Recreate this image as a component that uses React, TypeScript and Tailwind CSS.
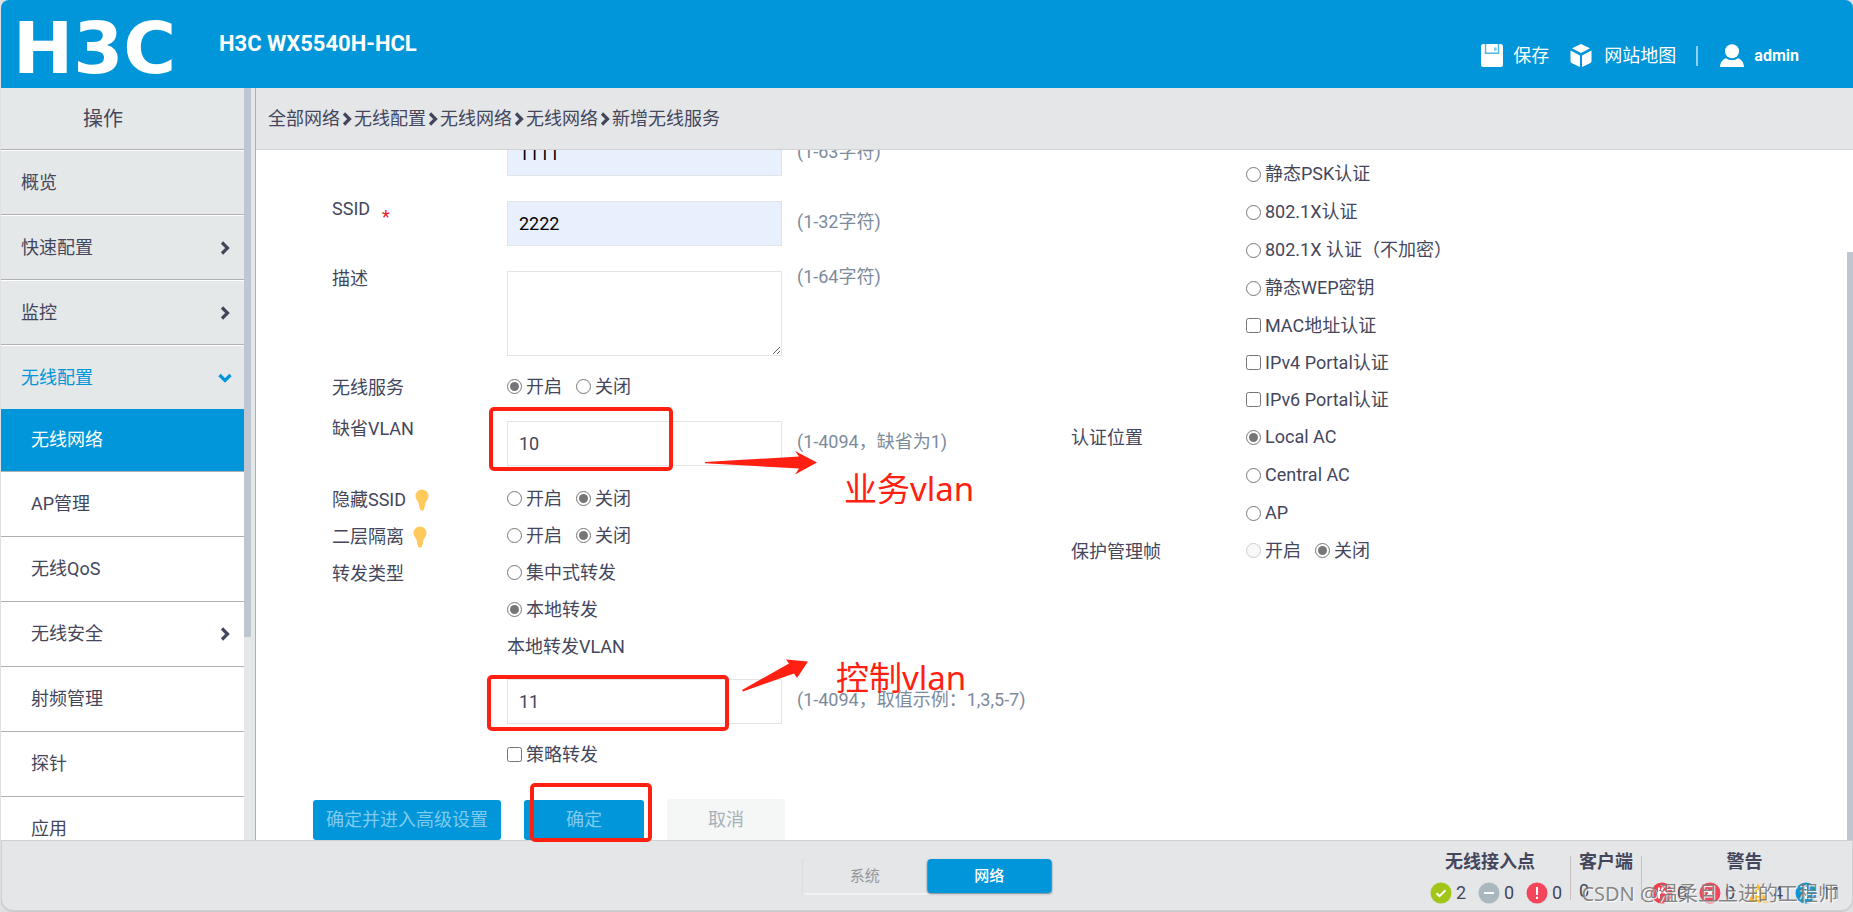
// 无线服务新增页
// 顶栏 / 左侧菜单 / 面包屑 / 表单 / 底部状态栏，最上层为操作标注
import { useId, type ReactNode } from 'react'

type MenuItem = { label: string; arrow?: boolean; open?: boolean; active?: boolean }

const TOP_MENU: MenuItem[] = [
  { label: '概览' },
  { label: '快速配置', arrow: true },
  { label: '监控', arrow: true },
  { label: '无线配置', arrow: true, open: true },
]

const SUB_MENU: MenuItem[] = [
  { label: '无线网络', active: true },
  { label: 'AP管理' },
  { label: '无线QoS' },
  { label: '无线安全', arrow: true },
  { label: '射频管理' },
  { label: '探针' },
  { label: '应用' },
]

const CRUMBS = ['全部网络', '无线配置', '无线网络', '无线网络', '新增无线服务']

const AUTH_RADIOS = ['静态PSK认证', '802.1X认证', '802.1X 认证（不加密）', '静态WEP密钥']
const AUTH_CHECKS = ['MAC地址认证', 'IPv4 Portal认证', 'IPv6 Portal认证']
const AUTH_PLACES = ['Local AC', 'Central AC', 'AP']

function Chevron({ className = '' }: { className?: string }) {
  return (
    <svg viewBox="0 0 10 14" className={`h-[14px] w-[10px] ${className}`} fill="none" stroke="currentColor" strokeWidth="3.2">
      <path d="M2 1.5 7.5 7 2 12.5" />
    </svg>
  )
}

function Bulb() {
  return (
    <svg viewBox="0 0 14 22" className="h-[22px] w-[14px]" fill="#ffc95c">
      <path d="M7 .5A6.500 6.500 0 0 0 .5 7.100c0 2.700 1.500 4 2.500 5.700.7 1.200.8 2.100.9 3.200h6.200c.1-1.100.2-2 .9-3.200 1-1.700 2.500-3 2.500-5.700A6.500 6.500 0 0 0 7 .5z" />
      <path d="M4.200 15.500h5.600v3.300H4.200zM5 18.500h4v1.900c0 .7-.8 1.200-2 1.200s-2-.5-2-1.200z" />
    </svg>
  )
}

function SaveIcon() {
  return (
    <svg viewBox="0 0 22 23" className="h-[23px] w-[22px]">
      <path d="M2.500 0h17A2.500 2.500 0 0 1 22 2.500v18a2.500 2.500 0 0 1-2.500 2.500h-17A2.500 2.500 0 0 1 0 20.500v-18A2.500 2.500 0 0 1 2.500 0z" fill="#fff" />
      <path d="M4.500 0v9.300h13V0" fill="none" stroke="#4db5e3" strokeWidth="1.400" />
      <rect x="13" y="3.500" width="2.600" height="3.200" fill="#7ccbec" />
    </svg>
  )
}

function CubeIcon() {
  return (
    <svg viewBox="0 0 22 23" className="h-[23px] w-[22px]" fill="#fff">
      <path d="M11 0 20 4.200 11 9 2 4.200z" />
      <path d="M.5 6.500 10 11.500V23l-8-3.700a2.200 2.200 0 0 1-1.500-2z" />
      <path d="M21.500 6.500 12 11.500V23l8-3.700a2.200 2.200 0 0 0 1.500-2z" />
    </svg>
  )
}

function UserIcon() {
  return (
    <svg viewBox="0 0 24 23" className="h-[23px] w-6" fill="#fff">
      <circle cx="12" cy="7.200" r="7" />
      <path d="M0 23c.2-5 2.800-7.800 6-8.800 1.700 1.200 3.700 1.900 6 1.900s4.300-.7 6-1.900c3.200 1 5.800 3.800 6 8.800z" />
    </svg>
  )
}

type StatusKind = 'ok' | 'off' | 'alert' | 'wave' | 'flag' | 'warn' | 'info'

const STATUS_FILL: Record<StatusKind, string> = {
  ok: '#a2c617',
  off: '#a9b7bf',
  alert: '#f4465a',
  wave: '#ee3f4d',
  flag: '#f4465a',
  warn: '#fcb92c',
  info: '#0f95d6',
}

function StatusIcon({ kind }: { kind: StatusKind }) {
  return (
    <svg viewBox="0 0 22 22" className="size-[22px]" fill="none" stroke="#fff" strokeWidth="2">
      {kind === 'warn' ? (
        <path d="M11 1.500 21.500 20.500H.5z" fill={STATUS_FILL.warn} stroke="none" />
      ) : (
        <circle cx="11" cy="11" r="10.500" fill={STATUS_FILL[kind]} stroke="none" />
      )}
      {kind === 'ok' && <path d="m6.500 11.200 3 3 6-6" />}
      {kind === 'off' && <path d="M6 11h10" />}
      {kind === 'alert' && <path d="M11 5v8M11 14.800v2.200" />}
      {kind === 'wave' && <path d="M8 5.500v11M12 5.500l-3 6M13 9l3 4" />}
      {kind === 'flag' && <path d="m7.500 7.500 7 7M14.500 7.500l-7 7" />}
      {kind === 'warn' && <path d="M11 8v6M11 15.500v2" />}
      {kind === 'info' && <path d="M11 5v2.200M11 9v8" />}
    </svg>
  )
}

function Stat({ kind, value }: { kind: StatusKind; value: number }) {
  return (
    <span className="flex w-12 shrink-0 items-center gap-1">
      <StatusIcon kind={kind} />
      {value}
    </span>
  )
}

type ChoiceProps = { label: string; name?: string; type?: 'radio' | 'checkbox'; checked?: boolean; disabled?: boolean }

function Choice({ label, name, type = 'radio', checked, disabled }: ChoiceProps) {
  return (
    <label className="flex items-center gap-1 whitespace-nowrap">
      <input type={type} name={name} defaultChecked={checked} disabled={disabled} className="size-[15px] accent-[#767676]" />
      {label}
    </label>
  )
}

function OnOff({ name, on, lockOn }: { name: string; on?: boolean; lockOn?: boolean }) {
  return (
    <div className="flex h-[37px] items-center gap-[14px]">
      <Choice name={name} label="开启" checked={on} disabled={lockOn} />
      <Choice name={name} label="关闭" checked={!on} />
    </div>
  )
}

function OptionRow({ label, bulb, children }: { label?: string; bulb?: boolean; children: ReactNode }) {
  return (
    <div className="flex items-start">
      <div className="-mb-1 flex h-10 w-[175px] shrink-0 items-center gap-[9px]">
        {label}
        {bulb && <Bulb />}
      </div>
      <div>{children}</div>
    </div>
  )
}

type FieldProps = { label?: string; hint: string; value?: string; required?: boolean; filled?: boolean; area?: boolean }

function Field({ label, hint, value, required, filled, area }: FieldProps) {
  const id = useId()
  return (
    <div className="flex items-start">
      <label htmlFor={id} className="flex h-4 w-[175px] shrink-0 items-start gap-3 leading-4">
        {label}
        {required && <span className="pt-2 text-[#e8202e]">*</span>}
      </label>
      {area ? (
        <textarea id={id} className="block h-[85px] w-[275px] border border-[#e3e4e6] px-[11px]" />
      ) : (
        <input
          id={id}
          aria-label={label ?? hint}
          defaultValue={value}
          className={`h-[45px] w-[275px] border border-[#e3e4e6] px-[11px] ${filled ? 'bg-[#e8effd] text-black' : 'bg-white'}`}
        />
      )}
      <span className={`ml-[15px] whitespace-nowrap text-[#7c8b9c] ${area ? 'leading-3' : 'leading-[42px]'}`}>{hint}</span>
    </div>
  )
}

function Sidebar() {
  return (
    <aside className="flex w-[255px] shrink-0 border-r border-[#b0b0b2] bg-[#e4e8e8]">
      <nav className="flex-1 overflow-hidden">
        <div className="flex h-[62px] items-center border-b border-[#b0b0b2] pl-[82px] text-xl">操作</div>
        <ul>
          {TOP_MENU.map((m) => (
            <li key={m.label}>
              <a
                href="#"
                className={`flex items-center justify-between border-t border-white pl-5 pr-[14px] ${
                  m.open ? 'h-16 text-[#0096d9]' : 'h-[65px] border-b border-b-[#b0b0b2]'
                }`}
              >
                {m.label}
                {m.arrow && <Chevron className={m.open ? 'rotate-90' : ''} />}
              </a>
            </li>
          ))}
        </ul>
        <ul className="bg-white">
          {SUB_MENU.map((m) => (
            <li key={m.label}>
              <a
                href="#"
                className={`flex items-center justify-between border-b border-[#b0b0b2] pl-[30px] pr-[14px] ${
                  m.active ? 'h-[63px] bg-[#0096d9] text-white' : 'h-[65px]'
                }`}
              >
                {m.label}
                {m.arrow && <Chevron />}
              </a>
            </li>
          ))}
        </ul>
      </nav>
      <div className="w-[11px]">
        <div className="h-[549px] w-[7px] bg-[#bdc6d1]" />
      </div>
    </aside>
  )
}

function ServiceForm() {
  return (
    <form className="-mt-[19px]">
      <div className="grid grid-cols-2 pl-[76px] pr-[37px]">
        <div>
          <div className="flex flex-col gap-[25px]">
            <Field hint="(1-63字符)" value="1111" filled />
            <Field label="SSID" hint="(1-32字符)" value="2222" required filled />
            <Field label="描述" hint="(1-64字符)" area />
          </div>
          <div className="pb-4 pt-3">
            <OptionRow label="无线服务"><OnOff name="service" on /></OptionRow>
          </div>
          <Field label="缺省VLAN" hint="(1-4094，缺省为1)" value="10" />
          <div className="py-[14px]">
            <OptionRow label="隐藏SSID" bulb><OnOff name="hide" /></OptionRow>
            <OptionRow label="二层隔离" bulb><OnOff name="isolate" /></OptionRow>
            <OptionRow label="转发类型">
              <div className="flex h-[37px] items-center"><Choice name="forward" label="集中式转发" /></div>
              <div className="flex h-[37px] items-center"><Choice name="forward" label="本地转发" checked /></div>
              <div className="flex h-[37px] items-center">本地转发VLAN</div>
            </OptionRow>
          </div>
          <Field hint="(1-4094，取值示例：1,3,5-7)" value="11" />
          <div className="pb-4 pt-3">
            <OptionRow>
              <div className="flex h-[37px] items-center"><Choice type="checkbox" label="策略转发" /></div>
            </OptionRow>
          </div>
        </div>
        <div className="pt-6">
          <OptionRow>
            {AUTH_RADIOS.map((t) => (
              <div key={t} className="flex h-[38px] items-center"><Choice name="auth" label={t} /></div>
            ))}
            {AUTH_CHECKS.map((t) => (
              <div key={t} className="flex h-[37px] items-center"><Choice type="checkbox" label={t} /></div>
            ))}
          </OptionRow>
          <OptionRow label="认证位置">
            {AUTH_PLACES.map((t, i) => (
              <div key={t} className="flex h-[38px] items-center"><Choice name="place" label={t} checked={i === 0} /></div>
            ))}
          </OptionRow>
          <OptionRow label="保护管理帧"><OnOff name="pmf" lockOn /></OptionRow>
        </div>
      </div>
      <div className="mt-[10px] flex items-center gap-[23px] pl-[57px]">
        <button type="button" className="h-10 w-[188px] rounded-[3px] bg-[#0096d9] text-[#80caec]">确定并进入高级设置</button>
        <button type="button" className="h-10 w-[120px] rounded-[3px] bg-[#0096d9] text-[#80caec]">确定</button>
        <button type="button" className="h-[42px] w-[118px] rounded-[3px] bg-[#f5f6f6] text-[#a5b3bb]">取消</button>
      </div>
    </form>
  )
}

function Footer() {
  return (
    <footer className="relative flex h-[71px] shrink-0 items-start justify-end rounded-b-xl border border-[#cfd0d3] bg-[#e5e6e8] pr-[14px] shadow-[0_1px_1px_#c8c9cc]">
      <div className="absolute left-1/2 top-[18px] flex w-[249px] -translate-x-1/2 rounded-[4px] border-b-2 border-[#f3f3f5] text-[15px] shadow-[0_0_1px_#cfd0d3]">
        <button type="button" className="h-[34px] flex-1 text-[#96979b]">系统</button>
        <button type="button" className="h-[34px] flex-1 rounded-[4px] bg-[#0096d9] font-medium text-white shadow-[0_1px_2px_#6f7f8a]">网络</button>
      </div>
      <div className="w-[144px] pl-1 pr-5 pt-2">
        <div className="text-center font-bold leading-[26px]">无线接入点</div>
        <div className="flex pt-[6px]">
          <Stat kind="ok" value={2} />
          <Stat kind="off" value={0} />
          <Stat kind="alert" value={0} />
        </div>
      </div>
      <div className="mt-[15px] h-11 w-px bg-[#c9bdbd]" />
      <div className="w-[70px] pl-2 pt-2">
        <div className="whitespace-nowrap font-bold leading-[26px]">客户端</div>
        <div className="pt-1">0</div>
      </div>
      <div className="mt-[15px] h-11 w-px bg-[#c9bdbd]" />
      <div className="w-[196px] pl-[9px] pt-2">
        <div className="text-center font-bold leading-[26px]">警告</div>
        <div className="flex pt-[6px]">
          <Stat kind="wave" value={0} />
          <Stat kind="flag" value={0} />
          <Stat kind="warn" value={4} />
          <Stat kind="info" value={11} />
        </div>
      </div>
      <div className="absolute right-[14px] top-[39px] whitespace-nowrap font-['Noto_Sans','Noto_Sans_CJK_SC',sans-serif] text-xl leading-7 text-[#777]/90 [text-shadow:1px_1px_1px_#fff]">
        CSDN @温柔且上进的工程师
      </div>
    </footer>
  )
}

// 红框、箭头和说明文字，覆盖在表单之上
function Marks() {
  return (
    <div className="pointer-events-none absolute inset-0 font-['Noto_Sans','Noto_Sans_CJK_SC',sans-serif] text-[33px] leading-10 text-[#ff2012]">
      <div className="absolute left-[489px] top-[407px] h-[64px] w-[184px] rounded-[5px] border-4 border-[#ff2012]" />
      <div className="absolute left-[487px] top-[675px] h-[56px] w-[242px] rounded-[5px] border-4 border-[#ff2012]" />
      <div className="absolute left-[530px] top-[783px] h-[59px] w-[122px] rounded-[5px] border-4 border-[#ff2012]" />
      <svg viewBox="0 0 112 24" className="absolute left-[705px] top-[451px] h-6 w-28" fill="#ff2012">
        <path d="M0 11 94 5.500 90 0 112 11.500 90 23.500 94 17.500 0 12.200z" />
      </svg>
      <svg viewBox="0 0 68 34" className="absolute left-[742px] top-[659px] h-[34px] w-[68px]" fill="#ff2012">
        <path d="M0 31 47 4.500 44 .5 66 2.500 55 19 52 14.500 1 32.500z" />
      </svg>
      <div className="absolute left-[844px] top-[469px]">业务vlan</div>
      <div className="absolute left-[836px] top-[658px]">控制vlan</div>
    </div>
  )
}

export default function App() {
  return (
    <div className="relative flex h-screen flex-col overflow-hidden bg-[#dfe0e3] pl-px font-[Roboto,'Noto_Sans_CJK_SC',sans-serif] text-lg leading-6 text-[#44475c]">
      <header className="flex h-[88px] shrink-0 items-center rounded-t-lg bg-[#0096d9] text-white">
        <div className="w-[201px] pl-[12px] pt-[7px] font-['DejaVu_Sans',sans-serif] text-[72px] font-bold leading-none">H3C</div>
        <h1 className="flex-1 pl-[17px] text-[22px] font-bold">H3C WX5540H-HCL</h1>
        <div className="flex items-center pr-[54px] pt-[23px]">
          <a href="#" className="flex items-center gap-[10px]"><SaveIcon />保存</a>
          <a href="#" className="ml-[21px] flex items-center gap-3"><CubeIcon />网站地图</a>
          <span className="ml-5 mr-[22px] h-5 w-[2px] bg-[#8fd0ee]" />
          <a href="#" className="flex items-center gap-[10px] text-base font-bold"><UserIcon />admin</a>
        </div>
      </header>
      <div className="flex min-h-0 flex-1">
        <Sidebar />
        <main className="flex min-w-0 flex-1 flex-col bg-white">
          <div className="flex h-[62px] shrink-0 items-center border-b border-[#cfd1d4] bg-[#e5e6e8] pl-3">
            {CRUMBS.map((c, i) => (
              <span key={i} className="flex items-center">
                {i > 0 && <Chevron className="mx-[2px]" />}
                {c}
              </span>
            ))}
          </div>
          <div className="flex min-h-0 flex-1">
            <div className="min-w-0 flex-1 overflow-hidden"><ServiceForm /></div>
            <div className="flex w-[6px] flex-col pt-[102px]">
              <div className="flex-1 bg-[#bdc6d1]" />
            </div>
          </div>
        </main>
      </div>
      <Footer />
      <div className="h-px shrink-0" />
      <Marks />
    </div>
  )
}
